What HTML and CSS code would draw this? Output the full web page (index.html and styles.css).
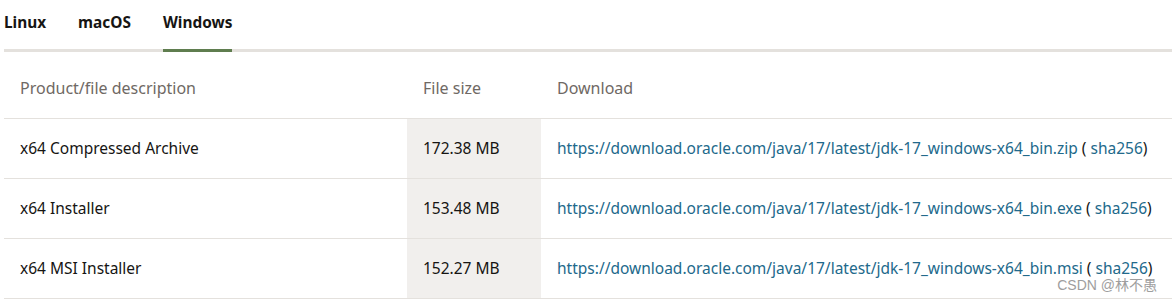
FILE: index.html
```html
<!DOCTYPE html>
<html lang="en">
<head>
<meta charset="utf-8">
<link rel="stylesheet" href="styles.css">
</head>
<body>
<div class="page">
  <div class="tabs">
    <span class="tab">Linux</span>
    <span class="tab">macOS</span>
    <span class="tab active">Windows</span>
  </div>
  <table class="dl">
    <colgroup>
      <col class="c1"><col class="c2"><col class="c3">
    </colgroup>
    <thead>
      <tr><th>Product/file description</th><th>File size</th><th>Download</th></tr>
    </thead>
    <tbody>
      <tr><td>x64 Compressed Archive</td><td class="size">172.38 MB</td><td><a class="lnk">https://download.oracle.com/java/17/latest/jdk-17_windows-x64_bin.zip</a> ( <a class="lnk">sha256</a>)</td></tr>
      <tr><td>x64 Installer</td><td class="size">153.48 MB</td><td><a class="lnk">https://download.oracle.com/java/17/latest/jdk-17_windows-x64_bin.exe</a> ( <a class="lnk">sha256</a>)</td></tr>
      <tr><td>x64 MSI Installer</td><td class="size">152.27 MB</td><td><a class="lnk">https://download.oracle.com/java/17/latest/jdk-17_windows-x64_bin.msi</a> ( <a class="lnk">sha256</a>)</td></tr>
    </tbody>
  </table>
  <div class="wm">CSDN @林不愚</div>
</div>
</body>
</html>
```
FILE: styles.css
```css
html, body { margin: 0; padding: 0; background: #fff; }
body { font-family: "Noto Sans", "Open Sans", sans-serif; color: #161513; }
.page { position: relative; width: 1172px; height: 302px; overflow: hidden; padding-left: 4px; box-sizing: border-box; }
.tabs { display: flex; gap: 32px; height: 49px; border-bottom: 3px solid #e4e1dd; }
.tab { font-size: 15.4px; font-weight: 700; line-height: 20px; padding-top: 13px; height: 37px; box-sizing: border-box; color: #161513; }
.tab.active { height: 52px; border-bottom: 3px solid #5f7d4f; }
.dl { border-collapse: collapse; width: 1168px; table-layout: fixed; font-size: 15.5px; }
.c1 { width: 403px; } .c2 { width: 134px; } .c3 { width: 631px; }
.dl th { text-align: left; font-weight: 400; font-size: 16px; color: #6f6964; height: 66px; padding: 6px 16px 0; box-sizing: border-box; border-bottom: 1px solid #e4e1dd; vertical-align: middle; }
.dl td { height: 60px; padding: 0 16px; box-sizing: border-box; border-bottom: 1px solid #e4e1dd; vertical-align: middle; white-space: nowrap; }
.dl td.size { background: #f1efed; }
.lnk { color: #22698b; text-decoration: none; }
.wm { position: absolute; right: 15px; bottom: 8px; font-family: "Liberation Sans", "Noto Sans CJK SC", sans-serif; font-size: 14px; color: #9e9e9e; line-height: 18px; }
```
